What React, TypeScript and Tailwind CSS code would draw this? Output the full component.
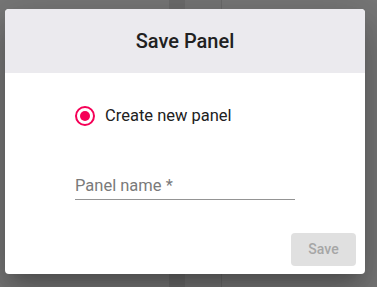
import React from 'react'

function Radio() {
  return (
    <span className="flex h-5 w-5 items-center justify-center rounded-full border-2 border-[#f50057]">
      <span className="h-2.5 w-2.5 rounded-full bg-[#f50057]" />
    </span>
  )
}

export default function App() {
  return (
    <div
      className="relative h-[287px] w-[377px] overflow-hidden bg-[#757575]"
      style={{ fontFamily: 'Roboto, "Liberation Sans", sans-serif' }}
    >
      {/* backdrop: dimmed page behind the dialog */}
      <div className="flex h-full w-full">
        <div className="w-[169px] bg-[#777777]" />
        <div className="w-[16px] bg-[#6c6c6c]" />
        <div className="w-[36px] bg-[#757575]" />
        <div className="w-px bg-[#6a6a6a]" />
        <div className="flex-1 bg-[#777777]" />
      </div>

      {/* dialog */}
      <div className="absolute left-[5px] top-[9px] flex h-[265px] w-[360px] flex-col overflow-hidden rounded bg-white shadow-[0_11px_15px_-7px_rgba(0,0,0,0.2),0_24px_38px_3px_rgba(0,0,0,0.14),0_9px_46px_8px_rgba(0,0,0,0.12)]">
        <div className="flex h-16 items-center justify-center bg-[#ebeaee]">
          <h2 className="text-[20px] font-medium text-[#212121]">Save Panel</h2>
        </div>

        <div className="flex flex-1 flex-col">
          <div className="mx-auto mt-[33px] flex w-[220px] flex-col">
            <label className="flex items-center gap-[10px]">
              <Radio />
              <span className="text-[16.5px] leading-5 text-[#212121]">Create new panel</span>
            </label>

            <div className="mt-[48px] border-b border-[#949494] pb-px">
              <span className="text-[16.5px] leading-5 text-[#7a7a7a]">Panel name *</span>
            </div>
          </div>

          <div className="mt-auto flex justify-end pb-2 pr-[9px]">
            <button
              type="button"
              disabled
              className="h-[33px] w-[65px] rounded bg-[#e0e0e0] text-[14px] font-medium text-[#a6a6a6]"
            >
              Save
            </button>
          </div>
        </div>
      </div>
    </div>
  )
}
